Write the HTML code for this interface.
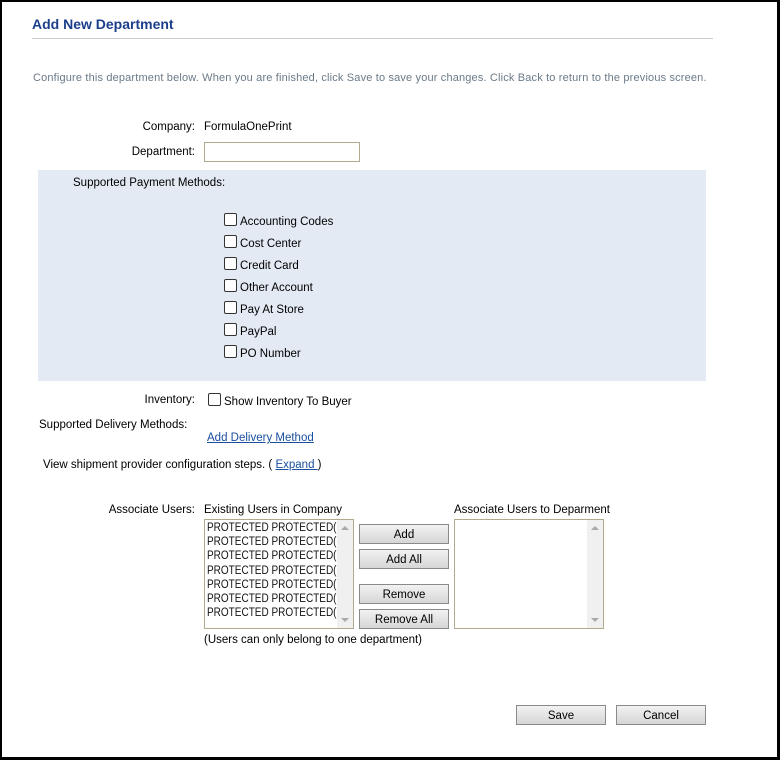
<!DOCTYPE html>
<html><head><style>
*{margin:0;padding:0;box-sizing:border-box}
body{width:780px;height:760px;background:#fff;font-family:"Liberation Sans",sans-serif;font-size:11.5px;color:#000;position:relative;overflow:hidden}
.frame{position:absolute;left:0;top:0;width:780px;height:760px;border:2px solid #000;border-right-width:3px;border-bottom-width:3px}
.a{position:absolute;white-space:nowrap}
.r{text-align:right}
.cb{position:absolute;width:13px;height:13px;border:1px solid #333;background:#fff;border-radius:2px}
.btn{position:absolute;width:90px;height:20px;border:1px solid #8a8a8a;background:linear-gradient(#f2f2f2,#d6d6d6);text-align:center;line-height:20px}
.lb{position:absolute;border:1px solid #b0aa90;background:#fff}
.sb{position:absolute;right:0;top:0;bottom:0;width:16px;background:#f0f0f0}
.up,.dn{position:absolute;left:4px;width:0;height:0;border-left:4px solid transparent;border-right:4px solid transparent}
.up{top:6px;border-bottom:4px solid #aaa}
.dn{bottom:6px;border-top:4px solid #aaa}
</style></head><body>
<div class="frame"></div>
<div class="a" style="left:32px;top:16px;font-size:14px;font-weight:bold;color:#1c3f8c">Add New Department</div>
<div class="a" style="left:32px;top:38px;width:681px;height:1px;background:#ccc"></div>
<div class="a" style="left:33px;top:72px;font-size:11px;color:#6b7a88;letter-spacing:0.16px">Configure this department below. When you are finished, click Save to save your changes. Click Back to return to the previous screen.</div>
<div class="a r" style="left:60px;width:135px;top:121px">Company:</div>
<div class="a" style="left:204px;top:121px">FormulaOnePrint</div>
<div class="a r" style="left:60px;width:135px;top:146px">Department:</div>
<div class="a" style="left:204px;top:142px;width:156px;height:20px;border:1px solid #b0aa90"></div>
<div class="a" style="left:38px;top:170px;width:668px;height:211px;background:#e4eaf4"></div>
<div class="a" style="left:73px;top:177px">Supported Payment Methods:</div>
<div class="cb" style="left:224px;top:213px"></div><div class="a" style="left:240px;top:216px">Accounting Codes</div>
<div class="cb" style="left:224px;top:235px"></div><div class="a" style="left:240px;top:238px">Cost Center</div>
<div class="cb" style="left:224px;top:257px"></div><div class="a" style="left:240px;top:260px">Credit Card</div>
<div class="cb" style="left:224px;top:279px"></div><div class="a" style="left:240px;top:282px">Other Account</div>
<div class="cb" style="left:224px;top:301px"></div><div class="a" style="left:240px;top:304px">Pay At Store</div>
<div class="cb" style="left:224px;top:323px"></div><div class="a" style="left:240px;top:326px">PayPal</div>
<div class="cb" style="left:224px;top:345px"></div><div class="a" style="left:240px;top:348px">PO Number</div>
<div class="a r" style="left:60px;width:135px;top:394px">Inventory:</div>
<div class="cb" style="left:208px;top:393px"></div><div class="a" style="left:224px;top:396px">Show Inventory To Buyer</div>
<div class="a" style="left:39px;top:419px">Supported Delivery Methods:</div>
<div class="a" style="left:207px;top:432px;color:#1a4fa0;text-decoration:underline">Add Delivery Method</div>
<div class="a" style="left:43px;top:459px">View shipment provider configuration steps. ( <span style="color:#1a4fa0;text-decoration:underline">Expand </span> )</div>
<div class="a r" style="left:60px;width:135px;top:504px">Associate Users:</div>
<div class="a" style="left:204px;top:504px">Existing Users in Company</div>
<div class="a" style="left:454px;top:504px">Associate Users to Deparment</div>
<div class="lb" style="left:204px;top:519px;width:150px;height:110px;overflow:hidden">
<div style="position:absolute;left:2px;top:1px;line-height:14.2px;color:#111;white-space:nowrap;width:130px;overflow:hidden"><div style="transform:scaleX(0.87);transform-origin:0 0">PROTECTED PROTECTED(1<br>PROTECTED PROTECTED(7<br>PROTECTED PROTECTED(I<br>PROTECTED PROTECTED(I<br>PROTECTED PROTECTED(1<br>PROTECTED PROTECTED(I<br>PROTECTED PROTECTED(I</div></div>
<div class="sb"><div class="up"></div><div class="dn"></div></div></div>
<div class="lb" style="left:454px;top:519px;width:150px;height:110px"><div class="sb"><div class="up"></div><div class="dn"></div></div></div>
<div class="btn" style="left:359px;top:524px">Add</div>
<div class="btn" style="left:359px;top:549px">Add All</div>
<div class="btn" style="left:359px;top:584px">Remove</div>
<div class="btn" style="left:359px;top:609px">Remove All</div>
<div class="a" style="left:204px;top:634px">(Users can only belong to one department)</div>
<div class="btn" style="left:516px;top:705px">Save</div>
<div class="btn" style="left:616px;top:705px">Cancel</div>
</body></html>
